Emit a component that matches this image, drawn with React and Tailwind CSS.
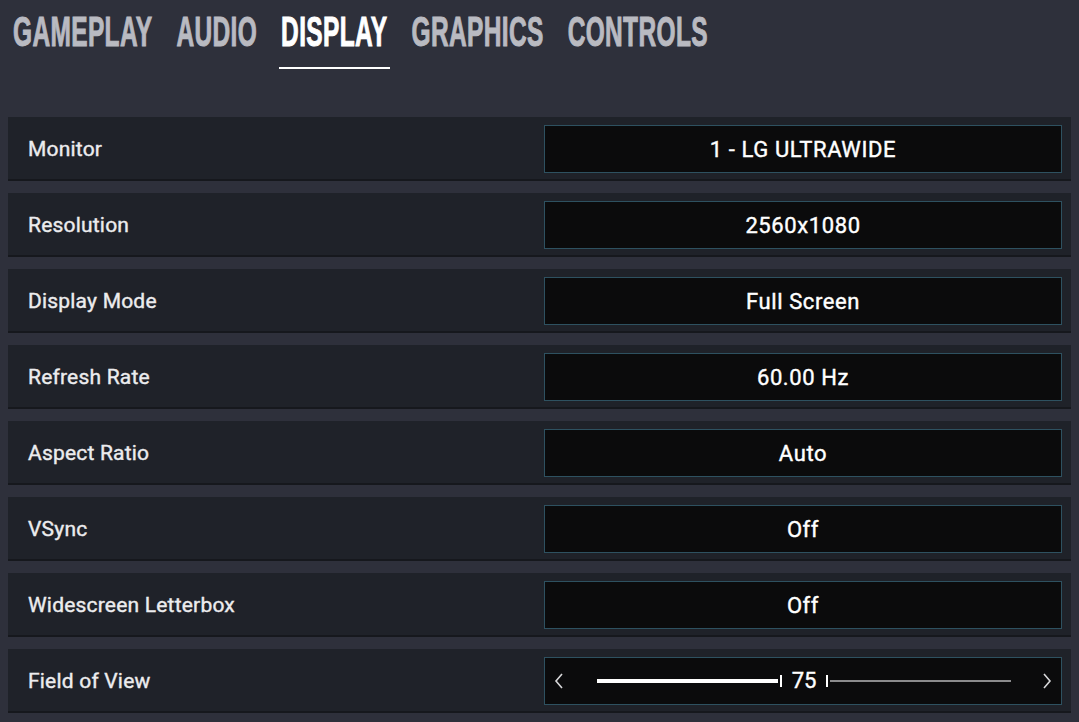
import React from "react";

const tabs = ["GAMEPLAY", "AUDIO", "DISPLAY", "GRAPHICS", "CONTROLS"];

const settings = [
  { label: "Monitor", value: "1 - LG ULTRAWIDE" },
  { label: "Resolution", value: "2560x1080" },
  { label: "Display Mode", value: "Full Screen" },
  { label: "Refresh Rate", value: "60.00 Hz" },
  { label: "Aspect Ratio", value: "Auto" },
  { label: "VSync", value: "Off" },
  { label: "Widescreen Letterbox", value: "Off" },
  { label: "Field of View", slider: 75 },
];

const Chevron = ({ dir = "left" }) => (
  <svg width="12" height="18" viewBox="0 0 12 18" className="shrink-0">
    <polyline
      points={dir === "left" ? "9,2 3,9 9,16" : "3,2 9,9 3,16"}
      fill="none"
      stroke="#d8d8da"
      strokeWidth="1.6"
    />
  </svg>
);

const Slider = ({ value }) => (
  <div className="h-full flex items-center justify-between px-[8px]">
    <Chevron dir="left" />
    <div className="flex items-center ml-[2px]">
      <div className="w-[181px] h-1 bg-white" />
      <div className="w-0.5 h-3 bg-white ml-[2px]" />
      <span className="mx-[10px] text-[22px] leading-none text-white [-webkit-text-stroke:0.4px_currentColor]">{value}</span>
      <div className="w-0.5 h-3 bg-white mr-[2px]" />
      <div className="w-[181px] h-0.5 bg-[#8b8b8d]" />
    </div>
    <Chevron dir="right" />
  </div>
);

// ---------- Row ----------
const SettingRow = ({ label, value, slider }) => (
  <div className="h-16 bg-[#1f2229] border-b-2 border-[#16181d] flex items-start pl-5 pr-[9px] pt-2">
    <div className="flex-1 h-12 pt-[2px] flex items-center text-[21px] tracking-[0.2px] text-[#ececee] [-webkit-text-stroke:0.4px_currentColor]">
      {label}
    </div>
    <div className="w-[518px] h-12 border border-[#2e5160] bg-[#0b0b0c]">
      {slider !== undefined ? (
        <Slider value={slider} />
      ) : (
        <div className="h-full flex items-center justify-center text-[22px] tracking-[0.6px] text-white [-webkit-text-stroke:0.4px_currentColor]">
          {value}
        </div>
      )}
    </div>
  </div>
);

export default function App() {
  const active = "DISPLAY";

  return (
    <div className="w-[1079px] h-[722px] overflow-hidden bg-[#2e303b] font-['Roboto','Liberation_Sans',sans-serif]">
      {/* ---------- Tabs ---------- */}
      <nav className="flex gap-6 pl-[13px] pt-3">
        {tabs.map(t => (
          <div key={t} className="flex flex-col">
            <span
              className={`h-[25px] inline-block origin-top scale-y-[1.7] font-['Liberation_Sans',sans-serif] font-bold text-[24.5px] leading-none tracking-[0.35px] [-webkit-text-stroke:0.6px_currentColor] ${
                t === active ? "text-white" : "text-[#b9bac1]"
              }`}
            >
              {t}
            </span>
            <div className={`h-0.5 mt-[30px] -mx-0.5 ${t === active ? "bg-white" : "bg-transparent"}`} />
          </div>
        ))}
      </nav>

      {/* ---------- Settings list ---------- */}
      <div className="mt-12 px-2 flex flex-col gap-3">
        {settings.map(s => (
          <SettingRow key={s.label} {...s} />
        ))}
      </div>
    </div>
  );
}
